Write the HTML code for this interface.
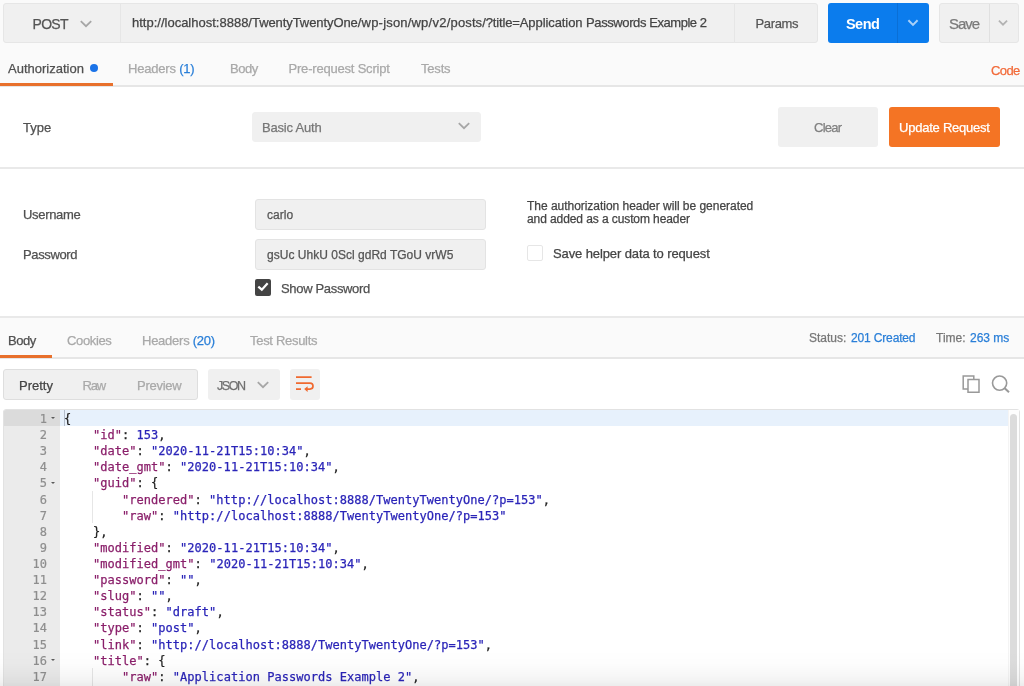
<!DOCTYPE html>
<html lang="en">
<head>
<meta charset="utf-8">
<title>Postman – Application Passwords Example</title>
<style>
*{box-sizing:border-box;margin:0;padding:0}
html,body{width:1024px;height:686px;overflow:hidden;background:#fff}
body{font-family:"Liberation Sans",sans-serif;font-size:13px;color:#505050;position:relative}
#wrap{position:absolute;left:0;top:0;width:1024px;height:686px;will-change:transform}
.abs{position:absolute}
.t{position:absolute;white-space:nowrap;line-height:20px;height:20px;-webkit-text-stroke:.25px currentColor}
#topbg{left:0;top:0;width:1024px;height:87px;background:#fafafa;border-bottom:2px solid #e6e6e6}
.box{position:absolute;background:#f0f0f0;border:1px solid #e6e6e6}
#method{left:3px;top:3px;width:118px;height:40px;border-radius:3px 0 0 3px}
#url{left:120px;top:3px;width:615px;height:40px;border-radius:0}
#params{left:734px;top:3px;width:84px;height:40px;border-radius:0 3px 3px 0}
#send{left:828px;top:3px;width:101px;height:40px;background:#0b7ced;border-radius:3px}
#sendsep{left:897px;top:3px;width:1px;height:40px;background:#0a6fd6}
#save{left:939px;top:3px;width:80px;height:40px;border-radius:3px}
#savesep{left:989px;top:4px;width:1px;height:38px;background:#e0e0e0}
.tab{color:#a9a9a9;font-size:13px}
.act{color:#505050}
.blue{color:#2a7fd8}
.orange{color:#f26b3a}
.uline{position:absolute;height:3.5px;background:#e8702c}
.hr{position:absolute;left:0;width:1024px;height:2px;background:#e9e9e9}
.inp{position:absolute;background:#f0f0f0;border:1px solid #e3e3e3;border-radius:3px}
#respbg{left:0;top:318px;width:1024px;height:41px;background:#fafafa;border-bottom:2px solid #e6e6e6}
#gutter{left:3px;top:410px;width:56.5px;height:276px;background:#ebebeb;border-radius:3px 0 0 0}
#activeline{left:59px;top:410px;width:949px;height:16px;background:#e7f1fc}
#scroll{left:1008px;top:410px;width:11px;height:276px;background:#fdfdfd;border-left:1px solid #f4f4f4}
#thumb{left:1009.5px;top:413.5px;width:7.5px;height:273px;background:#dcdcdc;border-radius:4px 4px 0 0}
pre{-webkit-text-stroke:.25px currentColor;font-family:"DejaVu Sans Mono","Liberation Mono",monospace;font-size:12px;letter-spacing:.03px;line-height:16.11px;position:absolute;margin:0}
#ln{left:3px;top:411px;width:44px;text-align:right;color:#8e8e8e;-webkit-text-stroke:.2px currentColor}
#code{left:64px;top:411px;color:#222}
.fold{position:absolute;left:50.5px;width:0;height:0;border-left:2.5px solid transparent;border-right:2.5px solid transparent;border-top:2.5px solid #5a5a5a}
.k{color:#8a1f6a}
.s{color:#2a24b8}
.n{color:#2a24b8}
</style>
</head>
<body>
<div id="wrap">
<div id="topbg" class="abs"></div>
<div id="method" class="box"></div>
<div id="url" class="box"></div>
<div id="params" class="box"></div>
<div class="t" style="left:32.5px;top:14px;font-size:14px;letter-spacing:-.7px;color:#555">POST</div>
<svg class="abs" style="left:79px;top:18.5px" width="14" height="10" viewBox="0 0 14 10"><path d="M1.8 2.2 L7 7.2 L12.2 2.2" fill="none" stroke="#a6a6a6" stroke-width="1.8"/></svg>
<div class="t" id="urltext" style="left:132px;top:13px;font-size:13px;color:#444;white-space:pre">http://localhost:8888/<span style="letter-spacing:-.077px">TwentyTwentyOne</span><span style="letter-spacing:.197px">/wp-json</span><span style="letter-spacing:.172px">/wp</span><span style="letter-spacing:.3px">/v2</span><span style="letter-spacing:.135px">/posts</span><span style="letter-spacing:-.146px">/?title=</span><span style="letter-spacing:-.081px">Application </span><span style="letter-spacing:-.395px">Passwords </span><span style="letter-spacing:-.463px">Example </span>2</div>
<div class="t" style="left:755.5px;top:14px;font-size:13px;letter-spacing:-.35px;color:#555">Params</div>
<div id="send" class="abs"></div>
<div id="sendsep" class="abs"></div>
<div class="t" style="left:846px;top:14px;font-size:14.5px;letter-spacing:-.55px;-webkit-text-stroke:0;font-weight:bold;color:#fff">Send</div>
<svg class="abs" style="left:906px;top:18px" width="14" height="10" viewBox="0 0 14 10"><path d="M2.4 2.3 L7 6.9 L11.6 2.3" fill="none" stroke="#a9d0f8" stroke-width="2"/></svg>
<div id="save" class="box"></div>
<div id="savesep" class="abs"></div>
<div class="t" style="left:949px;top:14px;font-size:15px;letter-spacing:-1px;color:#7a7a7a">Save</div>
<svg class="abs" style="left:996px;top:18px" width="14" height="10" viewBox="0 0 14 10"><path d="M2.9 2.6 L7 6.7 L11.1 2.6" fill="none" stroke="#b2b2b2" stroke-width="1.7"/></svg>

<div class="t tab act" style="left:8px;top:59px">Authorization</div>
<div class="abs" style="left:89.7px;top:64.4px;width:8px;height:8px;border-radius:50%;background:#1a73e8"></div>
<div class="t tab" style="left:128px;top:59px;letter-spacing:-.2px">Headers <span class="blue">(1)</span></div>
<div class="t tab" style="left:230px;top:59px;letter-spacing:-.45px">Body</div>
<div class="t tab" style="left:288.5px;top:59px;letter-spacing:-.2px">Pre-request Script</div>
<div class="t tab" style="left:421px;top:59px;letter-spacing:-.2px">Tests</div>
<div class="t orange" style="left:991px;top:61px;font-size:13px;letter-spacing:-.6px">Code</div>
<div class="uline" style="left:0;top:82.5px;width:112.5px"></div>

<div class="t" style="left:23px;top:118px">Type</div>
<div class="inp" style="left:252px;top:112px;width:229px;height:30px;border-color:#f0f0f0"></div>
<div class="t" style="left:262px;top:118px;letter-spacing:-.2px;color:#777">Basic Auth</div>
<svg class="abs" style="left:457.3px;top:121.2px" width="14" height="10" viewBox="0 0 14 10"><path d="M1.8 2.2 L7 7.2 L12.2 2.2" fill="none" stroke="#a6a6a6" stroke-width="1.8"/></svg>
<div class="abs" style="left:778px;top:107px;width:100px;height:40px;background:#f0f0f0;border-radius:3px"></div>
<div class="t" style="left:814px;top:118px;letter-spacing:-.75px;color:#808080">Clear</div>
<div class="abs" style="left:889px;top:107px;width:111px;height:40px;background:#f47424;border-radius:3px"></div>
<div class="t" style="left:899px;top:118px;letter-spacing:-.23px;color:#fff">Update Request</div>
<div class="hr" style="top:167px"></div>

<div class="t" style="left:23px;top:205px;letter-spacing:-.33px">Username</div>
<div class="inp" style="left:255px;top:199px;width:231px;height:31px"></div>
<div class="t" style="left:267px;top:205px;font-size:12px;letter-spacing:.05px;color:#555">carlo</div>
<div class="t" style="left:23px;top:245px;letter-spacing:-.38px">Password</div>
<div class="inp" style="left:255px;top:239px;width:231px;height:31px"></div>
<div class="t" style="left:267px;top:245px;font-size:12px;letter-spacing:.02px;color:#555">gsUc UhkU 0Scl gdRd TGoU vrW5</div>
<div class="abs" style="left:255.1px;top:279.2px;width:16.4px;height:16.5px;background:#444;border-radius:2px"></div>
<svg class="abs" style="left:255.1px;top:279.2px" width="16.5" height="16.5" viewBox="0 0 15 15"><path d="M3 6.9 L6.2 9.7 L11.5 3.9" fill="none" stroke="#fff" stroke-width="2"/></svg>
<div class="t" style="left:281px;top:279px;letter-spacing:-.33px">Show Password</div>

<div class="t" style="left:527px;top:199px;font-size:12px;letter-spacing:-.03px;line-height:14px;height:14px;color:#444">The authorization header will be generated</div>
<div class="t" style="left:527px;top:212px;font-size:12px;letter-spacing:-.09px;line-height:14px;height:14px;color:#444">and added as a custom header</div>
<div class="abs" style="left:526.6px;top:244.7px;width:16px;height:16px;background:#fff;border:1px solid #e6e6e6;border-radius:2px"></div>
<div class="t" style="left:553px;top:244px;font-size:13px;letter-spacing:-.11px;color:#444">Save helper data to request</div>

<div class="hr" style="top:316px"></div>
<div id="respbg" class="abs"></div>
<div class="t tab act" style="left:8px;top:331px;letter-spacing:-.45px">Body</div>
<div class="t tab" style="left:67px;top:331px;letter-spacing:-.35px">Cookies</div>
<div class="t tab" style="left:142px;top:331px;letter-spacing:-.25px">Headers <span class="blue">(20)</span></div>
<div class="t tab" style="left:250px;top:331px;letter-spacing:-.3px">Test Results</div>
<div class="uline" style="left:0;top:354.5px;width:51.5px"></div>
<div class="t" style="left:809px;top:328px;font-size:12px;color:#777">Status:</div>
<div class="t blue" style="left:851px;top:328px;font-size:12px;letter-spacing:-.15px">201 Created</div>
<div class="t" style="left:936px;top:328px;font-size:12px;color:#777">Time:</div>
<div class="t blue" style="left:970px;top:328px;font-size:12px">263 ms</div>

<div class="box" style="left:3px;top:369px;width:195px;height:31px;border-radius:3px;border-color:#dedede"></div>
<div class="t" style="left:19px;top:376px;color:#444">Pretty</div>
<div class="t tab" style="left:82.5px;top:376px;letter-spacing:-1.2px">Raw</div>
<div class="t tab" style="left:137px;top:376px;letter-spacing:-.25px">Preview</div>
<div class="abs" style="left:208px;top:369px;width:72px;height:31px;background:#f0f0f0;border-radius:3px"></div>
<div class="t" style="left:217px;top:376px;font-size:12.5px;letter-spacing:-1.4px;color:#707070">JSON</div>
<svg class="abs" style="left:255.5px;top:380px" width="14" height="10" viewBox="0 0 14 10"><path d="M1.8 2.2 L7 7.2 L12.2 2.2" fill="none" stroke="#a6a6a6" stroke-width="1.8"/></svg>
<div class="abs" style="left:290px;top:369px;width:30px;height:31px;background:#f0f0f0;border-radius:3px"></div>
<svg class="abs" style="left:295px;top:375px" width="20" height="18" viewBox="0 0 20 18"><path d="M1 2.2 H16.6 M1 8.1 H15 a3 3 0 0 1 0 6 H11 M1 14.1 H6" fill="none" stroke="#f0692f" stroke-width="1.7"/><path d="M12.6 11.2 L9.2 14.1 L12.6 17 Z" fill="#f0692f"/></svg>
<svg class="abs" style="left:961px;top:374px" width="20" height="20" viewBox="0 0 20 20"><path d="M7 15 H2.2 V2.1 H12.8 V5.4 M7 5.4 H18 V18.3 H7 Z" fill="none" stroke="#999" stroke-width="1.5"/></svg>
<svg class="abs" style="left:990px;top:374px" width="20" height="20" viewBox="0 0 20 20"><circle cx="9.6" cy="9.1" r="7.1" fill="none" stroke="#999" stroke-width="1.6"/><path d="M14.7 14.2 L19 18.3" stroke="#999" stroke-width="2"/></svg>

<div id="gutter" class="abs"></div>
<div id="activeline" class="abs"></div>
<div class="abs" style="left:3px;top:410px;width:56.5px;height:16px;background:#dbdbdb;border-radius:3px 0 0 0"></div>
<div class="abs" style="left:3px;top:409px;width:1017px;height:280px;border:1px solid #e2e2e2;border-radius:3px 3px 0 0"></div>
<div class="abs" style="left:64px;top:410px;width:1px;height:16px;background:rgba(60,70,90,.3)"></div>
<div class="fold" style="top:417.3px"></div><div class="fold" style="top:481.8px"></div><div class="fold" style="top:659.2px"></div>
<div class="abs" style="left:92px;top:491px;width:1px;height:32px;background:#e6e6e6"></div>
<div class="abs" style="left:92px;top:668px;width:1px;height:18px;background:#e6e6e6"></div>
<div id="scroll" class="abs"></div>
<div id="thumb" class="abs"></div>
<pre id="ln">1
2
3
4
5
6
7
8
9
10
11
12
13
14
15
16
17
18</pre>
<pre id="code">{
    <span class="k">"id"</span>: <span class="n">153</span>,
    <span class="k">"date"</span>: <span class="s">"2020-11-21T15:10:34"</span>,
    <span class="k">"date_gmt"</span>: <span class="s">"2020-11-21T15:10:34"</span>,
    <span class="k">"guid"</span>: {
        <span class="k">"rendered"</span>: <span class="s">"http://localhost:8888/TwentyTwentyOne/?p=153"</span>,
        <span class="k">"raw"</span>: <span class="s">"http://localhost:8888/TwentyTwentyOne/?p=153"</span>
    },
    <span class="k">"modified"</span>: <span class="s">"2020-11-21T15:10:34"</span>,
    <span class="k">"modified_gmt"</span>: <span class="s">"2020-11-21T15:10:34"</span>,
    <span class="k">"password"</span>: <span class="s">""</span>,
    <span class="k">"slug"</span>: <span class="s">""</span>,
    <span class="k">"status"</span>: <span class="s">"draft"</span>,
    <span class="k">"type"</span>: <span class="s">"post"</span>,
    <span class="k">"link"</span>: <span class="s">"http://localhost:8888/TwentyTwentyOne/?p=153"</span>,
    <span class="k">"title"</span>: {
        <span class="k">"raw"</span>: <span class="s">"Application Passwords Example 2"</span>,
        <span class="k">"rendered"</span>: <span class="s">"Application Passwords Example 2"</span></pre>
<div class="abs" style="left:0;top:650px;width:1024px;height:36px;background:linear-gradient(to bottom,rgba(0,0,0,0) 0%,rgba(0,0,0,.008) 35%,rgba(0,0,0,.03) 70%,rgba(0,0,0,.05) 88%,rgba(0,0,0,.075) 100%)"></div>
</div>
</body>
</html>
